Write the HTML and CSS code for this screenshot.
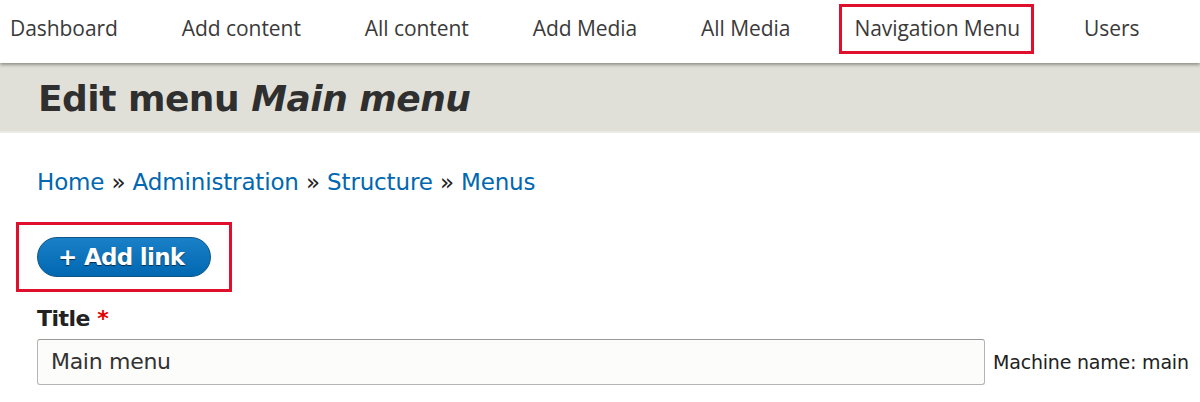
FILE: index.html
```html
<!DOCTYPE html>
<html lang="en">
<head>
<meta charset="utf-8">
<title>Edit menu Main menu</title>
<link rel="stylesheet" href="styles.css">
</head>
<body>
<nav class="topnav">
  <a class="nav-item">Dashboard</a>
  <a class="nav-item">Add content</a>
  <a class="nav-item">All content</a>
  <a class="nav-item">Add Media</a>
  <a class="nav-item">All Media</a>
  <a class="nav-item nav-item--marked">Navigation Menu</a>
  <a class="nav-item">Users</a>
</nav>
<header class="page-header">
  <h1 class="page-title">Edit menu <em>Main menu</em></h1>
</header>
<main class="content">
  <div class="breadcrumb">
    <a>Home</a> <span class="sep">»</span> <a>Administration</a> <span class="sep">»</span> <a>Structure</a> <span class="sep">»</span> <a>Menus</a>
  </div>
  <div class="action-wrap">
    <a class="button">+ Add link</a>
  </div>
  <div class="field">
    <label class="label">Title <span class="req">*</span></label>
    <div class="field-row">
      <div class="input">Main menu</div>
      <span class="machine">Machine name: main</span>
    </div>
  </div>
</main>
</body>
</html>
```
FILE: styles.css
```css
html, body { margin: 0; padding: 0; background: #fff; }
body { width: 1200px; height: 402px; overflow: hidden; font-family: "DejaVu Sans", sans-serif; }

.topnav {
  display: flex;
  align-items: center;
  height: 63px;
  padding-left: 10px;
  gap: 64px;
  background: #fff;
  position: relative;
  z-index: 2;
  box-shadow: 0 2px 3px rgba(0,0,0,0.35);
}
.nav-item {
  font-family: "Open Sans", sans-serif;
  font-size: 21px;
  color: #3a3a3a;
  line-height: 1;
  position: relative;
  top: -3px;
  letter-spacing: -0.06px;
}
.nav-item--marked {
  border: 3px solid #e0102c;
  padding: 11px 11px 12px 12px;
  margin: 0 -14px 0 -15px;
  top: -3px;
}

.page-header {
  background: #e1e0d8;
  height: 68px;
  border-bottom: 2px solid #ecebe5;
  display: flex;
  align-items: center;
  padding-left: 38px;
}
.page-title {
  margin: 0;
  position: relative;
  top: 1px;
  font-size: 36px;
  font-weight: bold;
  color: #2f2f2f;
  letter-spacing: -0.5px;
}
.page-title em { font-style: italic; }

.content { padding: 0 0 0 37px; }
.breadcrumb {
  margin-top: 36px;
  font-size: 23px;
  color: #0067b1;
  letter-spacing: -0.15px;
}
.breadcrumb .sep { color: #222; }

.action-wrap {
  display: inline-block;
  margin-top: 27px;
  margin-left: -21px;
  padding: 12px 18px 12px 18px;
  border: 3px solid #e0102c;
}
.button {
  display: inline-block;
  height: 38px;
  line-height: 38px;
  padding: 0 26px 0 20px;
  border-radius: 20px;
  border: 1px solid #0b5588;
  background: linear-gradient(#1a80c8, #0068b1);
  color: #fff;
  font-weight: bold;
  font-size: 23px;
  text-shadow: 0 1px 1px rgba(0,0,0,0.6);
  letter-spacing: -0.7px;
}

.field { margin-top: 14px; }
.label {
  display: block;
  font-weight: bold;
  font-size: 22px;
  color: #222;
  letter-spacing: -0.5px;
}
.req { color: #e20000; }
.field-row { display: flex; align-items: center; margin-top: 8px; gap: 8px; }
.input {
  width: 933px;
  height: 44px;
  line-height: 44px;
  padding-left: 13px;
  border: 1px solid #b4b4b4;
  border-top-color: #999;
  border-radius: 3px;
  background: #fcfcfa;
  font-size: 22px;
  color: #333;
  letter-spacing: -0.3px;
}
.machine { font-size: 19px; color: #222; letter-spacing: -0.2px; }
```
